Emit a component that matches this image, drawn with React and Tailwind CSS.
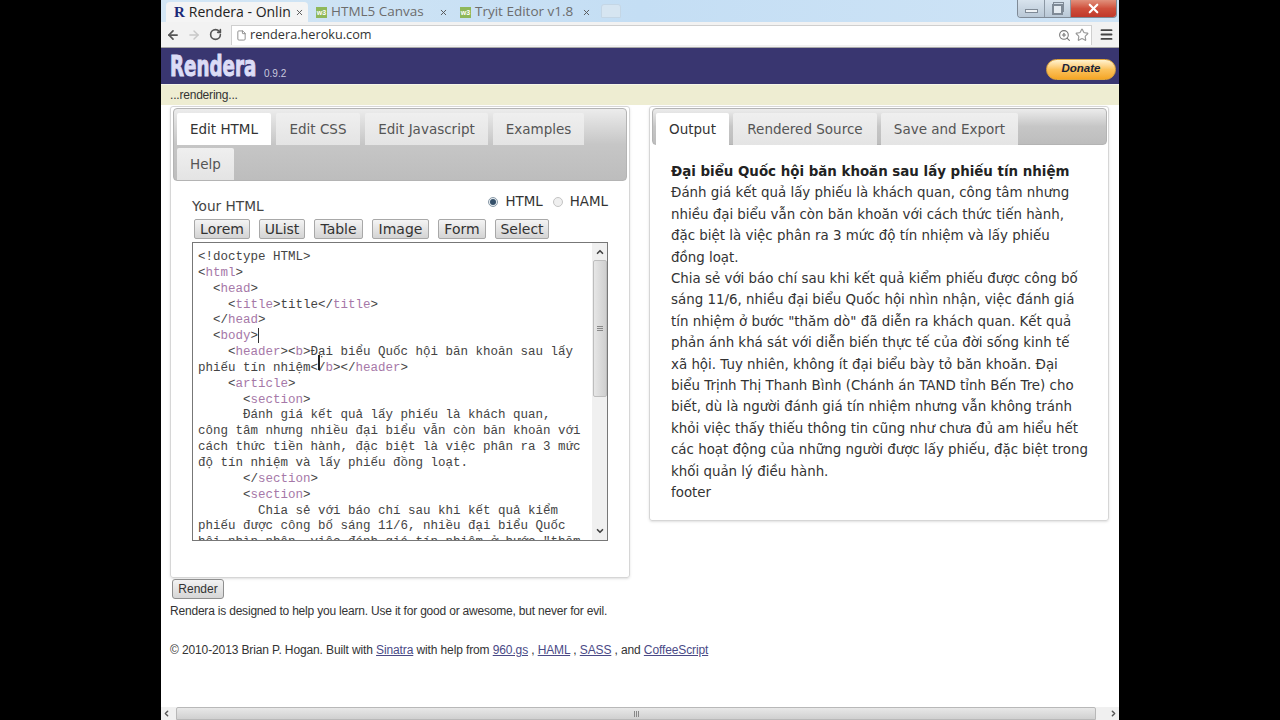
import { ArrowLeft, ArrowRight, RotateCw, File, ZoomIn, Star, Menu, ChevronUp, ChevronDown, ChevronLeft, ChevronRight, X } from 'lucide-react'

const sans = 'font-["DejaVu_Sans",sans-serif]'
const arial = 'font-["Liberation_Sans",Arial,sans-serif]'
const chromeFont = 'font-["Open_Sans",sans-serif]'

const leftTabs = [
  { label: 'Edit HTML', w: 'w-[94px]', active: true },
  { label: 'Edit CSS', w: 'w-[84px]' },
  { label: 'Edit Javascript', w: 'w-[123px]' },
  { label: 'Examples', w: 'w-[91px]' },
  { label: 'Help', w: 'w-[57px]' },
]

const rightTabs = [
  { label: 'Output', w: 'w-[73px]', active: true },
  { label: 'Rendered Source', w: 'w-[144px]' },
  { label: 'Save and Export', w: 'w-[137px]' },
]

const snippets = [
  { label: 'Lorem', w: 'w-[56px]' },
  { label: 'UList', w: 'w-[46px]' },
  { label: 'Table', w: 'w-[49px]' },
  { label: 'Image', w: 'w-[57px]' },
  { label: 'Form', w: 'w-[48px]' },
  { label: 'Select', w: 'w-[54px]' },
]

const paragraphs = [
  'Đánh giá kết quả lấy phiếu là khách quan, công tâm nhưng',
  'nhiều đại biểu vẫn còn băn khoăn với cách thức tiến hành,',
  'đặc biệt là việc phân ra 3 mức độ tín nhiệm và lấy phiếu',
  'đồng loạt.',
  'Chia sẻ với báo chí sau khi kết quả kiểm phiếu được công bố',
  'sáng 11/6, nhiều đại biểu Quốc hội nhìn nhận, việc đánh giá',
  'tín nhiệm ở bước "thăm dò" đã diễn ra khách quan. Kết quả',
  'phản ánh khá sát với diễn biến thực tế của đời sống kinh tế',
  'xã hội. Tuy nhiên, không ít đại biểu bày tỏ băn khoăn. Đại',
  'biểu Trịnh Thị Thanh Bình (Chánh án TAND tỉnh Bến Tre) cho',
  'biết, dù là người đánh giá tín nhiệm nhưng vẫn không tránh',
  'khỏi việc thấy thiếu thông tin cũng như chưa đủ am hiểu hết',
  'các hoạt động của những người được lấy phiếu, đặc biệt trong',
  'khối quản lý điều hành.',
  'footer',
]

function T({ children }) {
  return <span className="text-[#a678a8]">{children}</span>
}

function BrowserTab({ title, favicon, active, w }) {
  return (
    <div className={`${w} h-[20px] flex items-center gap-[4px] rounded-t-[4px] ${active ? 'pl-2 pr-[8px] bg-[#f4f4f4] text-[#222]' : 'px-[4px] text-[#6c6c6c]'}`}>
      {favicon === 'r' ? (
        <span className='font-["Liberation_Serif",serif] font-bold text-[15px] text-[#1c2a78] leading-none'>R</span>
      ) : (
        <span className={`${arial} w-[11px] h-[11px] bg-[#8fb85a] text-white text-[7px] leading-[11px] text-center font-bold shrink-0`}>w3</span>
      )}
      <span className={`${chromeFont} ${active ? 'text-[14px]' : 'text-[13.5px]'} flex-1 whitespace-nowrap leading-none`}>{title}</span>
      <X size={9} strokeWidth={2.5} className="text-[#555] shrink-0" />
    </div>
  )
}

function TabButton({ tab }) {
  return (
    <div className={`${tab.w} h-[32px] flex items-center justify-center text-[13.5px] rounded-t-[2px] ${tab.active ? 'bg-white text-[#333]' : 'bg-gradient-to-b from-[#efefef] to-[#e4e4e4] text-[#555]'}`}>
      {tab.label}
    </div>
  )
}

function Radio({ on }) {
  return (
    <span className={`w-[10px] h-[10px] rounded-full border flex items-center justify-center ${on ? 'border-[#8a9aa8] bg-[#e8eef2]' : 'border-[#c4c4c4] bg-[#efefef]'}`}>
      {on && <span className="w-[6px] h-[6px] rounded-full bg-[#35506a]" />}
    </span>
  )
}

export default function App() {
  return (
    <div className="h-[720px] bg-black flex overflow-hidden">
      <div className="w-[958px] ml-[161px] h-full bg-white flex flex-col relative overflow-hidden">
        {/* Tab strip */}
        <div className="h-[22px] shrink-0 bg-gradient-to-r from-[#d3e6f5] via-[#c4def4] to-[#cfe4f6] flex pl-[5px]">
          <div className="flex gap-[4px] items-end">
            <BrowserTab title="Rendera - Onlin" favicon="r" active w="w-[142px]" />
            <BrowserTab title="HTML5 Canvas" w="w-[140px]" />
            <BrowserTab title="Tryit Editor v1.8" w="w-[139px]" />
            <div className="w-[20px] h-[14px] ml-[2px] mb-[4px] rounded-t-[3px] bg-[#d6e5f1] border border-[#c4d6e5]" />
          </div>
          <div className="ml-auto mr-[2px] h-[18px] flex rounded-b-[4px] border border-t-0 border-[#7f8a96] overflow-hidden">
            <div className="w-[26px] bg-gradient-to-b from-[#d8e3ed] to-[#b9c8d6] flex items-end justify-center pb-[4px]">
              <span className="w-[13px] h-[4px] bg-[#eef2f5] border border-[#7f8a96]" />
            </div>
            <div className="w-[27px] border-x border-[#8c98a4] bg-gradient-to-b from-[#d8e3ed] to-[#b9c8d6] flex items-center justify-center relative">
              <span className="absolute top-[2px] left-[8px] w-[11px] h-[10px] border border-[#7f8a96]" />
              <span className="relative mt-[2px] w-[11px] h-[11px] border-2 border-[#7f8a96] bg-[#e4ebf1]" />
            </div>
            <div className="w-[45px] bg-gradient-to-b from-[#e0907c] via-[#cf4f3c] to-[#c0392b] flex items-center justify-center">
              <X size={15} strokeWidth={3.5} className="text-white" />
            </div>
          </div>
        </div>

        {/* Toolbar */}
        <div className="h-[26px] shrink-0 bg-[#f2f2f2] border-b border-[#a8a8a8] flex items-center pl-[4px] pr-[4px]">
          <ArrowLeft size={14} strokeWidth={3} className="text-[#555] ml-[1px]" />
          <ArrowRight size={14} strokeWidth={2.5} className="text-[#c8c8c8] ml-[7px]" />
          <RotateCw size={13} strokeWidth={3} className="text-[#555] ml-[8px]" />
          <div className="ml-[9px] w-[861px] h-[20px] bg-white border-t border-x border-[#cfcfcf] flex items-center pl-[4px] pr-[2px] gap-[3px]">
            <File size={11} className="text-[#888]" />
            <span className={`${chromeFont} text-[12.7px] text-[#333]`}>rendera.heroku.com</span>
            <ZoomIn size={13} className="text-[#777] ml-auto mr-[1px]" />
            <Star size={14} className="text-[#999]" />
          </div>
          <Menu size={15} strokeWidth={3} className="text-[#444] ml-[7px]" />
        </div>

        {/* Site header */}
        <div className="h-[36px] shrink-0 bg-[#393670] flex items-center pl-[9px] pr-[3px]">
          <span className='inline-block font-["DejaVu_Sans_Condensed","DejaVu_Sans",sans-serif] font-bold text-[29px] leading-none text-[#dcdcf6] [-webkit-text-stroke:1px_#dcdcf6] origin-left scale-x-[0.7] w-[86px] whitespace-nowrap'>Rendera</span>
          <span className={`${arial} text-[10px] text-[#c9c9de] ml-[8px] mt-[14px]`}>0.9.2</span>
          <div className="ml-auto mt-[6px] w-[70px] h-[21px] rounded-full border border-[#e0a63c] bg-gradient-to-b from-[#fff3cf] via-[#fbc25a] to-[#f5a623] flex items-center justify-center">
            <span className={`${arial} italic font-bold text-[11.5px] text-[#1a2238]`}>Donate</span>
          </div>
        </div>

        {/* Notice */}
        <div className={`${arial} h-[21px] shrink-0 bg-[#eeedd2] border-t border-[#f6f6e8] pl-[9px] flex items-center text-[12px] tracking-[-0.2px] text-[#333]`}>
          ...rendering...
        </div>

        {/* Main columns */}
        <div className={`${sans} flex gap-[19px] pl-[9px] pt-[1px]`}>
          <div className="w-[460px]">
            <div className="h-[472px] rounded-[3px] border border-[#d6d6d6] p-[1px] shadow-sm">
              <div className="w-[454px] ml-[1px] h-[73px] rounded-[4px] bg-gradient-to-b from-[#ececec] via-[#c6c6c6] to-[#bdbdbd] border border-[#b4b4b4] px-[3px] pt-[4px] flex flex-wrap gap-x-[5px] gap-y-[3px] content-start">
                {leftTabs.map((tab) => <TabButton key={tab.label} tab={tab} />)}
              </div>

              <div className="pl-[20px] pr-[20px]">
                <div className="flex justify-between items-start h-[38px] text-[13.7px] text-[#444]">
                  <span className="mt-[15px]">Your HTML</span>
                  <div className="flex items-center gap-[10px] mt-[11px] text-[13.4px] text-[#333]">
                    <div className="flex items-center gap-[7px]">
                      <Radio on />
                      <span>HTML</span>
                    </div>
                    <div className="flex items-center gap-[7px]">
                      <Radio />
                      <span>HAML</span>
                    </div>
                  </div>
                </div>

                <div className="flex gap-[9px] pl-[2px] h-[23px] items-start">
                  {snippets.map((s) => (
                    <div key={s.label} className={`${s.w} h-[20px] flex items-center justify-center text-[14px] text-[#333] border border-[#a8a8a8] rounded-[2px] bg-gradient-to-b from-[#f4f4f4] to-[#d4d4d4]`}>{s.label}</div>
                  ))}
                </div>

                {/* Editor */}
                <div className="w-[416px] h-[299px] border border-[#777] flex bg-white overflow-hidden relative">
                  <div className='flex-1 pl-[5px] pt-[7px] font-["Liberation_Mono",monospace] text-[12.5px] leading-[15.85px] text-[#444] whitespace-pre overflow-hidden'>
                    <div>{'<!doctype HTML>'}</div>
                    <div>{'<'}<T>html</T>{'>'}</div>
                    <div>{'  <'}<T>head</T>{'>'}</div>
                    <div>{'    <'}<T>title</T>{'>title</'}<T>title</T>{'>'}</div>
                    <div>{'  </'}<T>head</T>{'>'}</div>
                    <div>{'  <'}<T>body</T>{'>'}</div>
                    <div>{'    <'}<T>header</T>{'><'}<T>b</T>{'>Đại biểu Quốc hội băn khoăn sau lấy'}</div>
                    <div>{'phiếu tín nhiệm</'}<T>b</T>{'></'}<T>header</T>{'>'}</div>
                    <div>{'    <'}<T>article</T>{'>'}</div>
                    <div>{'      <'}<T>section</T>{'>'}</div>
                    <div>{'      Đánh giá kết quả lấy phiếu là khách quan,'}</div>
                    <div>công tâm nhưng nhiều đại biểu vẫn còn băn khoăn với</div>
                    <div>cách thức tiền hành, đặc biệt là việc phân ra 3 mức</div>
                    <div>độ tín nhiệm và lấy phiếu đồng loạt.</div>
                    <div>{'      </'}<T>section</T>{'>'}</div>
                    <div>{'      <'}<T>section</T>{'>'}</div>
                    <div>{'        Chia sẻ với báo chí sau khi kết quả kiểm'}</div>
                    <div>phiếu được công bố sáng 11/6, nhiều đại biểu Quốc</div>
                    <div>hội nhìn nhận, việc đánh giá tín nhiệm ở bước "thăm</div>
                  </div>
                  <div className="w-[15px] shrink-0 bg-[#f0f0f0] flex flex-col items-center">
                    <ChevronUp size={10} strokeWidth={4} className="text-[#444] mt-[4px] h-[10px]" />
                    <div className="w-[14px] h-[137px] mt-[3px] rounded-[2px] border border-[#bdbdbd] bg-gradient-to-r from-[#e6e6e6] to-[#cfcfcf] flex flex-col items-center justify-center gap-[1px]">
                      <span className="w-[6px] h-px bg-[#888]" />
                      <span className="w-[6px] h-px bg-[#888]" />
                      <span className="w-[6px] h-px bg-[#888]" />
                    </div>
                    <ChevronDown size={10} strokeWidth={4} className="text-[#444] mt-auto mb-[4px]" />
                  </div>
                  {/* text caret and mouse pointer */}
                  <span className="absolute left-[65px] top-[85px] w-px h-[15px] bg-[#333]" />
                  <span className="absolute left-[125px] top-[112px] w-[2px] h-[15px] bg-[#222]" />
                </div>
              </div>
            </div>

            <div className={`${arial} text-[12px] text-[#333]`}>
              <div className="w-[52px] h-[20px] mt-[1px] ml-[2px] flex items-center justify-center border border-[#8f8f8f] rounded-[3px] bg-gradient-to-b from-[#f3f3f3] to-[#d6d6d6]">Render</div>
              <p className="mt-[3px] leading-[18px] tracking-[-0.2px] whitespace-nowrap">Rendera is designed to help you learn. Use it for good or awesome, but never for evil.</p>
              <p className="mt-[21px] leading-[18px] tracking-[-0.12px] whitespace-nowrap">
                © 2010-2013 Brian P. Hogan. Built with <a className="underline text-[#4a4a86]">Sinatra</a> with help from <a className="underline text-[#4a4a86]">960.gs</a> , <a className="underline text-[#4a4a86]">HAML</a> , <a className="underline text-[#4a4a86]">SASS</a> , and <a className="underline text-[#4a4a86]">CoffeeScript</a>
              </p>
            </div>
          </div>

          <div className="w-[460px] h-[415px] rounded-[3px] border border-[#d6d6d6] p-[1px] shadow-sm self-start">
            <div className="w-[455px] ml-[1px] h-[37px] rounded-[4px] bg-gradient-to-b from-[#ececec] via-[#c6c6c6] to-[#bdbdbd] border border-[#b4b4b4] px-[3px] pt-[4px] flex gap-[4px]">
              {rightTabs.map((tab) => <TabButton key={tab.label} tab={tab} />)}
            </div>
            <div className="pl-[20px] pt-[16px] text-[13.4px] leading-[21.4px] text-[#333] whitespace-nowrap">
              <div className="font-bold text-[#222]">Đại biểu Quốc hội băn khoăn sau lấy phiếu tín nhiệm</div>
              {paragraphs.map((line) => <div key={line}>{line}</div>)}
            </div>
          </div>
        </div>

        {/* Bottom scrollbar */}
        <div className="absolute bottom-0 inset-x-0 h-[13px] bg-[#f0f0f0] flex items-center">
          <ChevronLeft size={9} strokeWidth={4} className="text-[#555] ml-[1px]" />
          <div className="flex-1 ml-[5px] mr-[13px] h-[13px] rounded-t-[2px] border border-[#b8b8b8] bg-gradient-to-b from-[#e8e8e8] to-[#d0d0d0] flex items-center justify-center gap-[1px]">
            <span className="w-px h-[6px] bg-[#888]" />
            <span className="w-px h-[6px] bg-[#888]" />
            <span className="w-px h-[6px] bg-[#888]" />
          </div>
          <ChevronRight size={9} strokeWidth={4} className="text-[#555] mr-[1px]" />
        </div>
      </div>
    </div>
  )
}
